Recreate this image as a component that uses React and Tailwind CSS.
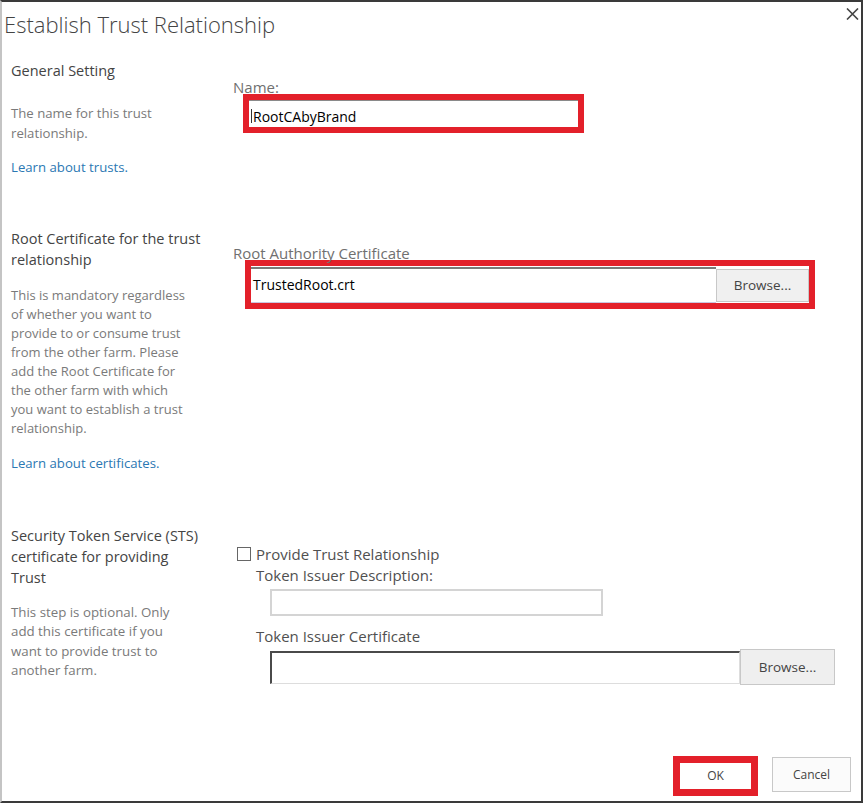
import { useState } from "react";

const font = { fontFamily: '"Open Sans", "Noto Sans", sans-serif' };

const App = () => {
  const [provide, setProvide] = useState(false);

  return (
    <div className="w-[865px] h-[804px] bg-white" style={font}>
      <div className="w-[863px] h-[803px] flex flex-col border-t-2 border-r-2 border-b-2 border-[#3a3a3a] border-l-2 border-l-[#c4c4c4]">
        {/* Title bar */}
        <div className="flex justify-between">
          <h1 className="pl-[2px] pt-[4px] text-[22px] leading-[36px] font-light text-[#444]">
            Establish Trust Relationship
          </h1>
          <button className="mt-[6px] mr-[2px] w-[13px] h-[12px]">
            <svg width="13" height="12" viewBox="0 0 13 12">
              <path d="M1 0.5 L12 11.5 M12 0.5 L1 11.5" stroke="#444" strokeWidth="1.6" fill="none" />
            </svg>
          </button>
        </div>

        {/* General Setting */}
        <div className="flex mt-[19px]">
          <div className="w-[231px] pl-[9px]">
            <h2 className="text-[14.5px] leading-[20px] text-[#444]">General Setting</h2>
            <p className="mt-[22px] text-[13.2px] leading-[20px] text-[#7a7a7a]">
              The name for this trust
              <br />
              relationship.
            </p>
            <a href="#" className="block mt-[14px] text-[13.2px] leading-[20px] text-[#2b78b3]">
              Learn about trusts.
            </a>
          </div>
          <div className="flex-1">
            <label className="block mt-[19px] text-[15px] leading-[14px] text-[#707070]">Name:</label>
            <div className="ml-[10px] w-[341px] h-[39px] border-[6px] border-[#e3202a] bg-white">
              <div className="h-full border-t border-[#8a8a8a] flex items-center pl-[2px] pt-[4px]">
                <span className="w-px h-[14px] bg-[#333] mr-px" />
                <span className="text-[14px] text-black">RootCAbyBrand</span>
              </div>
            </div>
          </div>
        </div>

        {/* Root Certificate */}
        <div className="flex mt-[51px]">
          <div className="w-[231px] pl-[9px]">
            <h2 className="text-[14.5px] leading-[21px] text-[#444]">
              Root Certificate for the trust
              <br />
              relationship
            </h2>
            <p className="mt-[16px] text-[13px] leading-[19px] text-[#7a7a7a]">
              This is mandatory regardless
              <br />
              of whether you want to
              <br />
              provide to or consume trust
              <br />
              from the other farm. Please
              <br />
              add the Root Certificate for
              <br />
              the other farm with which
              <br />
              you want to establish a trust
              <br />
              relationship.
            </p>
            <a href="#" className="block mt-[15px] text-[13.2px] leading-[20px] text-[#2b78b3]">
              Learn about certificates.
            </a>
          </div>
          <div className="flex-1">
            <label className="block mt-[18px] text-[15px] leading-[14px] text-[#707070]">
              Root Authority Certificate
            </label>
            <div className="ml-[12px] w-[570px] h-[49px] border-[6px] border-[#e3202a] bg-white flex">
              <div className="flex-1 mt-[1px] border-t-2 border-[#7a7a7a] flex items-center pl-[2px] pb-[2px] border-b border-b-[#c9c6e0]">
                <span className="text-[14px] text-black">TrustedRoot.crt</span>
              </div>
              <button className="w-[93px] mt-[3px] mb-[1px] border border-[#c8c8c8] bg-[#f0f0f0] text-[13.5px] text-[#444]">
                Browse...
              </button>
            </div>
          </div>
        </div>

        {/* STS certificate */}
        <div className="flex mt-[52px]">
          <div className="w-[231px] pl-[9px]">
            <h2 className="text-[14.5px] leading-[21px] text-[#444]">
              Security Token Service (STS)
              <br />
              certificate for providing
              <br />
              Trust
            </h2>
            <p className="mt-[15px] text-[13.3px] leading-[19.3px] text-[#7a7a7a]">
              This step is optional. Only
              <br />
              add this certificate if you
              <br />
              want to provide trust to
              <br />
              another farm.
            </p>
          </div>
          <div className="flex-1">
            <label className="flex items-center mt-[19px] h-[20px] text-[15px] text-[#505050]">
              <input
                type="checkbox"
                checked={provide}
                onChange={(e) => setProvide(e.target.checked)}
                className="appearance-none ml-[4px] mr-[5px] w-[14px] h-[14px] border border-[#666] bg-white"
              />
              Provide Trust Relationship
            </label>
            <div className="pl-[23px] mt-[1px] text-[15px] leading-[20px] text-[#505050]">
              Token Issuer Description:
            </div>
            <input
              type="text"
              className="block ml-[37px] mt-[4px] w-[333px] h-[27px] border-2 border-[#d4d4d4] bg-white outline-none"
            />
            <div className="pl-[23px] mt-[10px] text-[15px] leading-[20px] text-[#505050]">
              Token Issuer Certificate
            </div>
            <div className="flex ml-[37px] mt-[3px] h-[36px]">
              <input
                type="text"
                className="w-[470px] mt-[2px] mb-[1px] border-t-2 border-l-2 border-[#4a4a4a] border-r border-b border-r-[#ddd] border-b-[#ddd] bg-white outline-none"
              />
              <button className="w-[95px] border border-[#c8c8c8] bg-[#efefef] text-[13.5px] text-[#444]">
                Browse...
              </button>
            </div>
          </div>
        </div>

        {/* Footer */}
        <div className="mt-auto flex justify-end items-start gap-[14px] pr-[10px] pb-[5px]">
          <div className="w-[85px] h-[40px] border-[7px] border-[#e3202a] bg-white flex items-center justify-center">
            <button className="text-[12px] text-[#444]">OK</button>
          </div>
          <button className="mt-[1px] w-[79px] h-[35px] border border-[#c8c8c8] bg-[#fbfbfb] text-[12px] text-[#444]">
            Cancel
          </button>
        </div>
      </div>
    </div>
  );
};

export default App;
